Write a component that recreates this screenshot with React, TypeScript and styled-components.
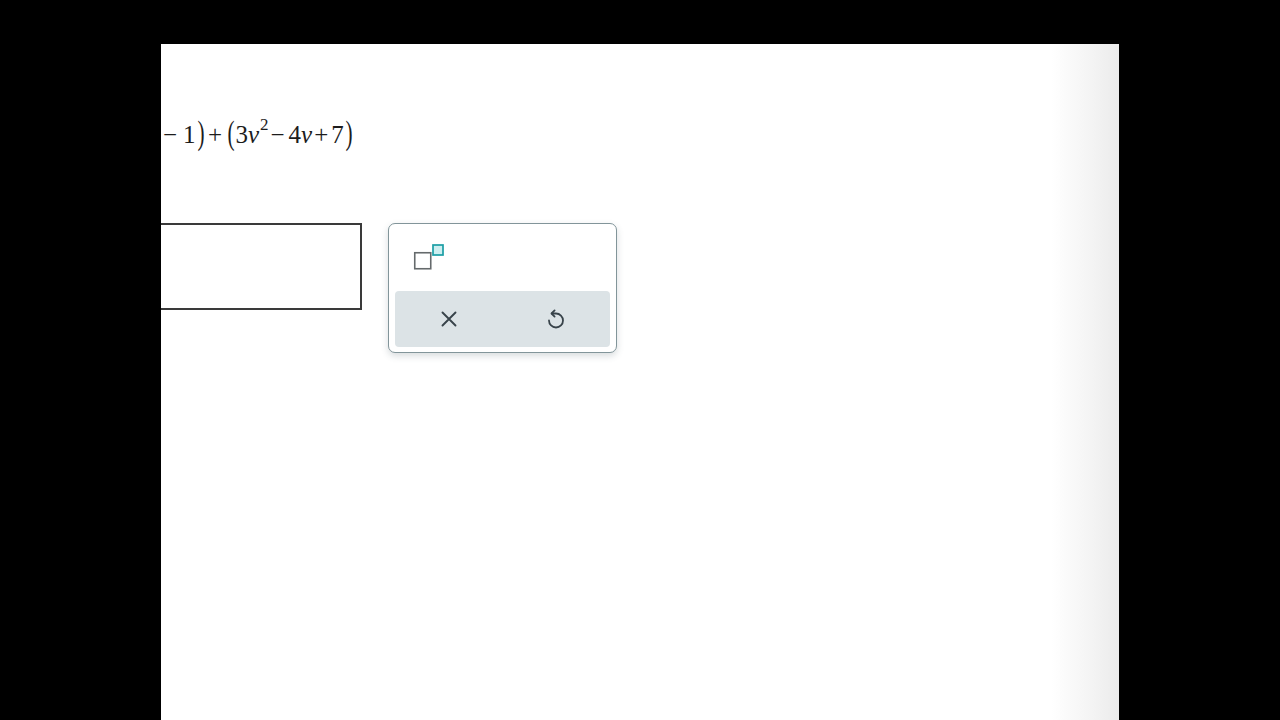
import styled, { createGlobalStyle } from "styled-components";

const GlobalStyle = createGlobalStyle`
    html, body {
        margin: 0;
        padding: 0;
        background: #000000;
    }
`

const Screen = styled.div`
    width: 1280px;
    height: 720px;
    box-sizing: border-box;
    padding: 44px 0 0 161px;
    overflow: hidden;
`

const Sheet = styled.div`
    width: 958px;
    height: 676px;
    overflow: hidden;
    background: linear-gradient(to right, #ffffff 0, #ffffff 890px, #f4f4f4 930px, #ebebeb 958px);
    padding-top: 70px;
    box-sizing: border-box;
`

const Expression = styled.div`
    font-family: "Liberation Serif", "Times New Roman", serif;
    font-size: 25px;
    line-height: 42px;
    height: 42px;
    color: #1c1c1c;
    padding-left: 2px;
    white-space: nowrap;
    display: flex;
    align-items: baseline;
`

const Op = styled.span<{ left?: number; right?: number }>`
    margin-left: ${(p) => p.left ?? 0}px;
    margin-right: ${(p) => p.right ?? 0}px;
`

const Paren = styled.span<{ left?: number; right?: number }>`
    display: inline-block;
    transform: scale(0.85, 1.35);
    transform-origin: 50% 64%;
    margin-left: ${(p) => p.left ?? 0}px;
    margin-right: ${(p) => p.right ?? 0}px;
`

const Var = styled.i`
    font-style: italic;
`

const Sup = styled.span`
    font-size: 17px;
    position: relative;
    top: -13px;
    margin: 0 2px 0 1px;
`

const AnswerRow = styled.div`
    display: flex;
    align-items: flex-start;
    gap: 26px;
    margin-top: 67px;
`

const AnswerBox = styled.div`
    width: 201px;
    height: 87px;
    box-sizing: border-box;
    border: 2px solid #3a3a3a;
    border-left: none;
    background: #ffffff;
`

const Palette = styled.div`
    width: 229px;
    height: 130px;
    box-sizing: border-box;
    border: 1px solid #82959a;
    border-radius: 7px;
    background: #ffffff;
    box-shadow: 0 3px 7px rgba(60, 80, 90, 0.2);
    padding: 0 6px 5px 6px;
    display: flex;
    flex-direction: column;
`

const PaletteTop = styled.div`
    height: 67px;
    display: flex;
    align-items: flex-start;
    padding: 19px 0 0 18px;
    box-sizing: border-box;
`

const SuperscriptKey = styled.button`
    border: none;
    background: none;
    padding: 0;
    width: 32px;
    height: 28px;
    display: flex;
    cursor: pointer;
`

const KeyBar = styled.div`
    height: 56px;
    background: #dce3e6;
    border-radius: 4px;
    display: grid;
    grid-template-columns: 1fr 1fr;
`

const BarKey = styled.button`
    border: none;
    background: none;
    padding: 0;
    display: flex;
    align-items: center;
    justify-content: center;
    color: #38434a;
    cursor: pointer;
`

const SuperscriptIcon = () => (
    <svg width="32" height="28" viewBox="0 0 32 28">
        <rect x="1.75" y="9.75" width="16" height="16" fill="none" stroke="#656a6c" strokeWidth="1.6" />
        <rect x="20" y="2" width="10" height="10" fill="#cdeef0" stroke="#1b9ea5" strokeWidth="1.7" />
    </svg>
)

const ClearIcon = () => (
    <svg width="18" height="18" viewBox="0 0 18 18">
        <path d="M2.5 2.5 L15.5 15.5 M15.5 2.5 L2.5 15.5" stroke="currentColor" strokeWidth="1.9" strokeLinecap="round" />
    </svg>
)

const UndoIcon = () => (
    <svg width="20" height="22" viewBox="0 0 20 22">
        <path d="M6 5.5 H10 A7 7 0 1 1 3 12.5" fill="none" stroke="currentColor" strokeWidth="1.8" strokeLinecap="round" />
        <path d="M8.6 2.4 L5.5 5.5 L8.6 8.6" fill="none" stroke="currentColor" strokeWidth="1.8" strokeLinecap="round" strokeLinejoin="round" />
    </svg>
)

export default function App() {
    return (
        <>
            <GlobalStyle />
            <Screen>
                <Sheet>
                    <Expression>
                        <Op right={6}>−</Op>
                        <Op>1</Op>
                        <Paren left={1} right={3}>)</Paren>
                        <Op right={5}>+</Op>
                        <Paren>(</Paren>
                        <span>3</span>
                        <Var>v</Var>
                        <Sup>2</Sup>
                        <Op right={4}>−</Op>
                        <span>4</span>
                        <Var>v</Var>
                        <Op left={2} right={3}>+</Op>
                        <span>7</span>
                        <Paren left={1}>)</Paren>
                    </Expression>
                    <AnswerRow>
                        <AnswerBox />
                        <Palette>
                            <PaletteTop>
                                <SuperscriptKey aria-label="superscript">
                                    <SuperscriptIcon />
                                </SuperscriptKey>
                            </PaletteTop>
                            <KeyBar>
                                <BarKey aria-label="clear">
                                    <ClearIcon />
                                </BarKey>
                                <BarKey aria-label="undo">
                                    <UndoIcon />
                                </BarKey>
                            </KeyBar>
                        </Palette>
                    </AnswerRow>
                </Sheet>
            </Screen>
        </>
    );
}
